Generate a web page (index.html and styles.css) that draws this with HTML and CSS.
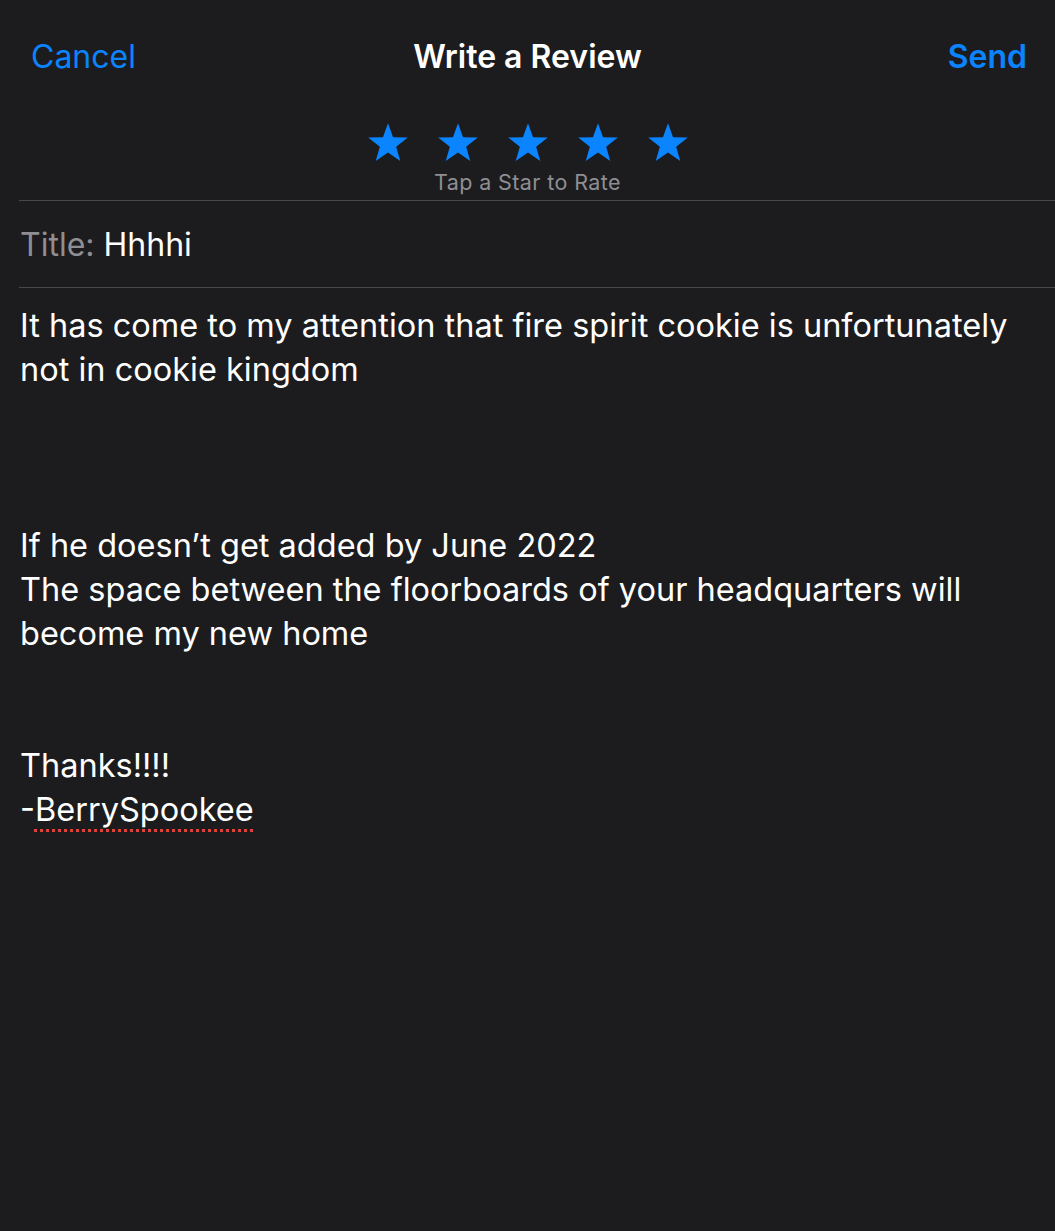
FILE: index.html
```html
<!DOCTYPE html>
<html lang="en">
<head>
  <meta charset="UTF-8" />
  <meta name="viewport" content="width=device-width, initial-scale=1.0" />
  <title>Write a Review</title>
  <link rel="stylesheet" href="styles.css">
</head>
<body>
  <div class="sheet">
    <header class="nav-bar">
      <a class="nav-btn cancel">Cancel</a>
      <h1 class="nav-title">Write a Review</h1>
      <a class="nav-btn send">Send</a>
    </header>

    <div class="rating">
      <div class="stars">
        <svg class="star" viewBox="0 0 24 24"><path d="M12 1.2l2.75 7.6 8.05.25-6.35 4.95 2.25 7.75L12 17.2l-6.7 4.550 2.25-7.75L1.2 9.05l8.05-.25z"/></svg>
        <svg class="star" viewBox="0 0 24 24"><path d="M12 1.2l2.75 7.6 8.05.25-6.35 4.95 2.25 7.75L12 17.2l-6.7 4.55 2.25-7.75L1.2 9.05l8.05-.25z"/></svg>
        <svg class="star" viewBox="0 0 24 24"><path d="M12 1.2l2.75 7.6 8.05.25-6.35 4.95 2.25 7.75L12 17.2l-6.7 4.55 2.25-7.75L1.2 9.05l8.05-.25z"/></svg>
        <svg class="star" viewBox="0 0 24 24"><path d="M12 1.2l2.75 7.6 8.05.25-6.35 4.95 2.25 7.75L12 17.2l-6.7 4.55 2.25-7.75L1.2 9.05l8.05-.25z"/></svg>
        <svg class="star" viewBox="0 0 24 24"><path d="M12 1.2l2.75 7.6 8.05.25-6.35 4.95 2.25 7.75L12 17.2l-6.7 4.55 2.25-7.75L1.2 9.05l8.05-.25z"/></svg>
      </div>
      <p class="rating-hint">Tap a Star to Rate</p>
    </div>

    <div class="title-row">
      <span class="title-label">Title:</span>
      <span class="title-value">Hhhhi</span>
    </div>

    <div class="review-body">
      <p>It has come to my attention that fire spirit cookie is unfortunately not in cookie kingdom</p>
      <p class="blank"></p>
      <p class="blank"></p>
      <p class="blank"></p>
      <p>If he doesn’t get added by June 2022</p>
      <p>The space between the floorboards of your headquarters will become my new home</p>
      <p class="blank"></p>
      <p class="blank"></p>
      <p>Thanks!!!!</p>
      <p>-<span class="misspelled">BerrySpookee</span></p>
    </div>
  </div>
</body>
</html>
```

FILE: styles.css
```css
body {
  background: #1c1c1e;
  color: #fff;
  font-family: Inter, 'Noto Sans', sans-serif;
  margin: 0;
}
.sheet {
  min-height: 1231px;
}
.nav-bar {
  display: flex;
  align-items: center;
  justify-content: space-between;
  height: 112px;
  padding: 0 28px 0 31px;
  position: relative;
}
.nav-btn {
  color: #0a84ff;
  font-size: 32px;
  cursor: pointer;
}
.nav-btn.send {
  font-weight: 600;
}
.nav-title {
  position: absolute;
  left: 0;
  right: 0;
  text-align: center;
  margin: 0;
  font-size: 32px;
  font-weight: 600;
  pointer-events: none;
}
.rating {
  display: flex;
  flex-direction: column;
  align-items: center;
  margin-top: 9px;
}
.stars {
  display: flex;
  gap: 26px;
}
.star {
  width: 44px;
  height: 44px;
  fill: #0a84ff;
}
.rating-hint {
  margin: 4px 0 0;
  font-size: 21.5px;
  color: #8e8e93;
  letter-spacing: 0.4px;
}
.title-row {
  margin-left: 19px;
  border-top: 1px solid #48484a;
  border-bottom: 1px solid #48484a;
  margin-top: 5px;
  height: 86px;
  display: flex;
  align-items: center;
  gap: 9px;
  padding-left: 1px;
  font-size: 32px;
}
.title-label {
  color: #8e8e93;
}
.review-body {
  padding: 16px 20px 0;
  font-size: 32.5px;
  line-height: 44px;
}
.review-body p {
  margin: 0;
}
.review-body .blank {
  height: 44px;
}
.misspelled {
  text-decoration: underline dotted #e0413a;
  text-decoration-thickness: 3px;
  text-underline-offset: 8px;
}
```
